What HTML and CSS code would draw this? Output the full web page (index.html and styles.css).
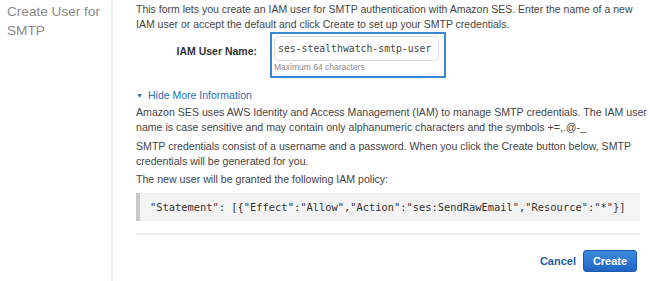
FILE: index.html
```html
<!DOCTYPE html>
<html lang="en">
<head>
  <meta charset="UTF-8" />
  <title>Create User for SMTP</title>
  <link rel="stylesheet" href="styles.css">
</head>
<body>
  <div class="page">
    <div class="sidebar">Create User for SMTP</div>

    <div class="main">
      <p class="intro">This form lets you create an IAM user for SMTP authentication with Amazon SES. Enter the name of a new IAM user or accept the default and click Create to set up your SMTP credentials.</p>

      <div class="form-row">
        <label for="iamUser">IAM User Name:</label>
        <div class="field-box">
          <input type="text" id="iamUser" value="ses-stealthwatch-smtp-user" />
          <div class="hint">Maximum 64 characters</div>
        </div>
      </div>

      <a class="toggle" href="#"><span class="caret">&#9660;</span>Hide More Information</a>

      <div class="more-info">
        <p>Amazon SES uses AWS Identity and Access Management (IAM) to manage SMTP credentials. The IAM user name is case sensitive and may contain only alphanumeric characters and the symbols +=,.@-_</p>
        <p>SMTP credentials consist of a username and a password. When you click the Create button below, SMTP credentials will be generated for you.</p>
        <p>The new user will be granted the following IAM policy:</p>
        <pre class="policy">"Statement": [{"Effect":"Allow","Action":"ses:SendRawEmail","Resource":"*"}]</pre>
      </div>

      <div class="actions">
        <a class="cancel" href="#">Cancel</a>
        <button type="button" class="create">Create</button>
      </div>
    </div>
  </div>
</body>
</html>
```

FILE: styles.css
```css
body {
  margin: 0;
  font-family: 'Liberation Sans', Arial, sans-serif;
  font-size: 10.5px;
  color: #444;
  background-color: #fff;
}

.page {
  display: flex;
  height: 281px;
  overflow: hidden;
}

.sidebar {
  width: 104px;
  flex-shrink: 0;
  padding: 2px 0 0 7px;
  font-size: 13.6px;
  line-height: 19px;
  color: #8a8a8a;
  border-right: 2px solid #ececec;
}

.main {
  flex: 1;
  padding: 2px 0 0 23px;
}

p {
  margin: 0 0 3.5px;
  line-height: 15px;
}

.intro {
  max-width: 500px;
  margin-bottom: 0;
}

.form-row {
  display: flex;
  align-items: flex-start;
}

.form-row label {
  width: 121px;
  text-align: right;
  padding-right: 13px;
  padding-top: 12px;
  line-height: 15px;
  font-weight: bold;
  color: #333;
}

.field-box {
  width: 165px;
  padding: 2px 5px 4px 2px;
  border: 2px solid #3a86d6;
}

.field-box input {
  display: block;
  width: 100%;
  box-sizing: border-box;
  height: 25px;
  margin: 0;
  padding: 0 3px;
  font-family: 'DejaVu Sans Mono', monospace;
  font-size: 9.8px;
  color: #444;
  border: 1px solid #ddd;
  border-radius: 4px;
  background-color: #fff;
}

.hint {
  margin-top: 1px;
  font-size: 8.5px;
  line-height: 10px;
  color: #888;
}

.toggle {
  display: block;
  margin-top: 10px;
  margin-bottom: 2px;
  color: #2a6bb5;
  text-decoration: none;
  line-height: 15px;
}

.caret {
  display: inline-block;
  width: 12px;
  font-size: 7px;
  vertical-align: 1px;
}

.more-info p {
  font-size: 10.6px;
}

.policy {
  margin: 6px 10px 12px 0;
  padding: 0 10px;
  height: 28px;
  line-height: 28px;
  background-color: #f3f3f3;
  border-left: 4px solid #c8c8c8;
  font-family: 'DejaVu Sans Mono', monospace;
  font-size: 10.4px;
  color: #333;
}

.actions {
  display: flex;
  justify-content: flex-end;
  align-items: center;
  gap: 7px;
  margin-right: 10px;
  padding: 15px 3px 0 0;
  border-top: 2px solid #eee;
}

.cancel {
  font-weight: bold;
  color: #1f5aa0;
  text-decoration: none;
  font-size: 11px;
}

.create {
  width: 54px;
  height: 22px;
  padding: 0;
  font-family: 'Liberation Sans', Arial, sans-serif;
  font-size: 11px;
  font-weight: bold;
  color: #fff;
  background: linear-gradient(#3c8ae0, #1f66c2);
  border: 1px solid #1a5bb0;
  border-radius: 3px;
}
```
